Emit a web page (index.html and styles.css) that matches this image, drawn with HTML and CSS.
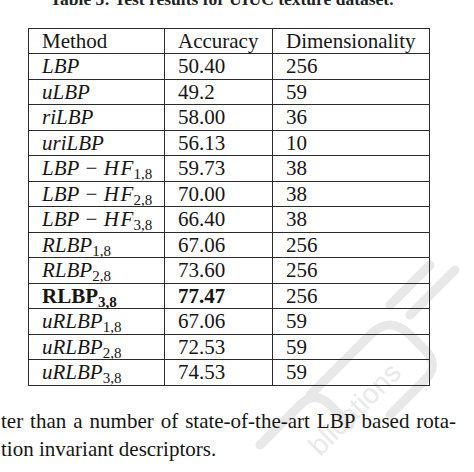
FILE: index.html
```html
<!DOCTYPE html>
<html>
<head>
<meta charset="utf-8">
<link rel="stylesheet" href="styles.css">
</head>
<body>
<div class="page">
  <div class="caption">Table 3: Test results for UIUC texture dataset.</div>
  <table class="results">
    <colgroup><col class="c1"><col class="c2"><col class="c3"></colgroup>
    <tr><td>Method</td><td>Accuracy</td><td>Dimensionality</td></tr>
    <tr><td><i>LBP</i></td><td>50.40</td><td>256</td></tr>
    <tr><td><i>uLBP</i></td><td>49.2</td><td>59</td></tr>
    <tr><td><i>riLBP</i></td><td>58.00</td><td>36</td></tr>
    <tr><td><i>uriLBP</i></td><td>56.13</td><td>10</td></tr>
    <tr><td><i>LBP</i> <span class="op">−</span> <i>H&#8202;F</i><sub>1,8</sub></td><td>59.73</td><td>38</td></tr>
    <tr><td><i>LBP</i> <span class="op">−</span> <i>H&#8202;F</i><sub>2,8</sub></td><td>70.00</td><td>38</td></tr>
    <tr><td><i>LBP</i> <span class="op">−</span> <i>H&#8202;F</i><sub>3,8</sub></td><td>66.40</td><td>38</td></tr>
    <tr><td><i>RLBP</i><sub>1,8</sub></td><td>67.06</td><td>256</td></tr>
    <tr><td><i>RLBP</i><sub>2,8</sub></td><td>73.60</td><td>256</td></tr>
    <tr class="best"><td><b>RLBP<sub>3,8</sub></b></td><td><b>77.47</b></td><td>256</td></tr>
    <tr><td><i>uRLBP</i><sub>1,8</sub></td><td>67.06</td><td>59</td></tr>
    <tr><td><i>uRLBP</i><sub>2,8</sub></td><td>72.53</td><td>59</td></tr>
    <tr><td><i>uRLBP</i><sub>3,8</sub></td><td>74.53</td><td>59</td></tr>
  </table>
  <div class="para">
    <div class="line1">ter than a number of state-of-the-art LBP based rota-</div>
    <div class="line2">tion invariant descriptors.</div>
  </div>
  <div class="watermark" aria-hidden="true">
    <svg width="230" height="225" viewBox="0 0 230 225">
      <g fill="none" stroke="#e8e8e8" stroke-width="9" stroke-linecap="round" stroke-linejoin="round">
        <path d="M70 150 L130 90 Q150 70 170 90 L185 105 Q200 120 185 135 L150 170"/>
        <path d="M20 200 L60 160 Q75 145 90 160 L110 180"/>
        <path d="M150 60 L190 20"/>
        <path d="M170 70 L215 25"/>
      </g>
      <text x="0" y="0" transform="translate(80 212) rotate(-45)" font-family="Liberation Sans, sans-serif" font-size="28" fill="#e9e9e9">blications</text>
    </svg>
  </div>
</div>
</body>
</html>
```
FILE: styles.css
```css
html, body {
  margin: 0;
  padding: 0;
  background: #ffffff;
}
.page {
  position: relative;
  width: 474px;
  height: 472px;
  overflow: hidden;
  font-family: "Liberation Serif", "Times New Roman", serif;
  color: #151515;
}
.caption {
  font-weight: bold;
  font-size: 17.5px;
  line-height: 17.5px;
  margin-top: -8.6px;
  padding-left: 50px;
  white-space: nowrap;
  color: #222;
}
.results {
  position: relative;
  z-index: 1;
  border-collapse: collapse;
  margin-top: 19px;
  margin-left: 28px;
  width: 401px;
  table-layout: fixed;
  font-size: 21px;
}
.c1 { width: 136px; }
.c2 { width: 108px; }
.c3 { width: 157px; }
.results tr {
  height: 25.5px;
}
.results td {
  border: 1.4px solid #2b2b2b;
  padding: 0 0 0 13px;
  height: 24.1px;
  line-height: 24px;
  white-space: nowrap;
  vertical-align: top;
}
.results sub {
  font-size: 15px;
  line-height: 0;
  vertical-align: -4px;
}
.results i { font-style: italic; }
.op { padding: 0 1px; }
.para {
  position: relative;
  z-index: 1;
  margin-top: 21px;
  font-size: 21px;
  line-height: 28px;
  padding-left: 1px;
}
.line1 {
  width: 455px;
  text-align: justify;
  text-align-last: justify;
}
.watermark {
  position: absolute;
  left: 240px;
  top: 245px;
  z-index: 0;
}
```
